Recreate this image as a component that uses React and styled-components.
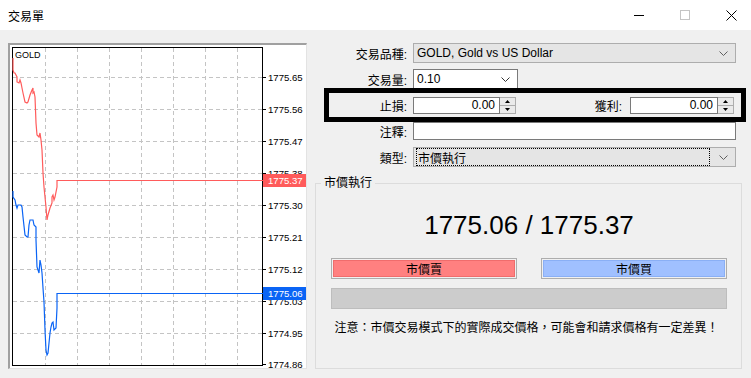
import React from "react";
import styled, { createGlobalStyle } from "styled-components";

const GlobalStyle = createGlobalStyle`
  html, body {
    margin: 0;
    padding: 0;
    background: #f0f0f0;
  }
  body {
    font-family: "Liberation Sans", "Noto Sans CJK TC", sans-serif;
    font-size: 12px;
    color: #000;
  }
`;

const red = [
  [13, 58], [13, 70], [14, 73], [15, 73], [17, 77], [17, 82], [19, 83], [20, 80],
  [21, 83], [22, 88], [23, 93], [25, 102], [27, 103], [28, 102], [30, 95],
  [32, 90], [33, 88], [33, 93], [34, 92], [35, 97], [36, 123], [37, 135],
  [39, 137], [40, 133], [41, 140], [42, 150], [43, 173], [44, 187], [46, 207],
  [47, 220], [48, 215], [50, 208], [52, 203], [52, 197], [53, 195], [54, 200],
  [55, 197], [57, 187], [57, 180.5], [263, 180.5],
];

const blue = [
  [13, 191], [13, 197], [15, 200], [16, 205], [17, 208], [18, 205], [21, 205],
  [22, 207], [23, 217], [25, 235], [27, 237], [28, 237], [29, 225], [30, 220],
  [33, 220], [34, 225], [36, 227], [36, 240], [37, 267], [39, 273], [40, 260],
  [41, 265], [42, 273], [43, 288], [44, 302], [45, 330], [46, 350], [47, 355],
  [48, 353], [49, 343], [50, 333], [51, 327], [52, 323], [53, 322], [54, 330],
  [56, 328], [57, 308], [57, 293.5], [263, 293.5],
];

const gridX = [45, 77, 109, 141, 173, 205, 237];
const levels = [
  ["1775.65", 77], ["1775.56", 109], ["1775.47", 141], ["1775.38", 173],
  ["1775.30", 205], ["1775.21", 237], ["1775.12", 269], ["1775.03", 301],
  ["1774.95", 333], ["1774.86", 364],
];

const toPoints = (list) => list.map(([x, y]) => `${x},${y}`).join(" ");

function PriceChart() {
  return (
    <svg width="296" height="323" viewBox="10 45 296 323">
      <g stroke="#c4c4c4" strokeDasharray="4 3" strokeWidth="1">
        {gridX.map((x) => (
          <line key={x} x1={x + 0.5} y1="48" x2={x + 0.5} y2="365" />
        ))}
        {levels.slice(0, 9).map(([, y]) => (
          <line key={y} x1="13" y1={y + 0.5} x2="262" y2={y + 0.5} />
        ))}
      </g>
      <rect x="12.5" y="47.5" width="250" height="318" fill="none" stroke="#000" />
      <text x="15" y="57.5" fontSize="9" fontFamily="Liberation Sans" fill="#000">
        GOLD
      </text>
      <polyline points={toPoints(red)} fill="none" stroke="#ff5b5b" strokeWidth="1.2" />
      <polyline points={toPoints(blue)} fill="none" stroke="#0a64f5" strokeWidth="1.2" />
      <g fontSize="9.6" fontFamily="Liberation Sans" fill="#000">
        {levels.map(([label, y]) => (
          <g key={label}>
            <line x1="263" y1={y + 0.5} x2="266" y2={y + 0.5} stroke="#000" />
            <text x="268" y={y + 3.5}>{label}</text>
          </g>
        ))}
      </g>
      <rect x="263" y="174" width="43" height="13" fill="#ff5b5b" />
      <text x="268" y="184" fontSize="9.6" fontFamily="Liberation Sans" fill="#fff">
        1775.37
      </text>
      <rect x="263" y="287" width="43" height="13" fill="#0a64f5" />
      <text x="268" y="297" fontSize="9.6" fontFamily="Liberation Sans" fill="#fff">
        1775.06
      </text>
    </svg>
  );
}

function Chevron({ color = "#606060" }) {
  return (
    <svg width="9" height="5" viewBox="0 0 9 5">
      <polyline points="0.5,0.5 4.5,4.5 8.5,0.5" fill="none" stroke={color} />
    </svg>
  );
}

function SpinBox({ value }) {
  return (
    <SpinGroup>
      <NumberBox>{value}</NumberBox>
      <Spinner>
        <SpinHalf>
          <svg width="5" height="3" viewBox="0 0 5 3">
            <polygon points="2.5,0 5,3 0,3" fill="#000" />
          </svg>
        </SpinHalf>
        <SpinHalf $bottom>
          <svg width="5" height="3" viewBox="0 0 5 3">
            <polygon points="0,0 5,0 2.5,3" fill="#000" />
          </svg>
        </SpinHalf>
      </Spinner>
    </SpinGroup>
  );
}

export default function App() {
  return (
    <>
      <GlobalStyle />
      <Window>
        <TitleBar>
          <Title>交易單</Title>
          <Controls>
            <ControlButton>
              <svg width="10" height="10" viewBox="0 0 10 10">
                <line x1="0" y1="5.5" x2="10" y2="5.5" stroke="#000" />
              </svg>
            </ControlButton>
            <ControlButton>
              <svg width="10" height="10" viewBox="0 0 10 10">
                <rect x="0.5" y="0.5" width="9" height="9" fill="none" stroke="#c4c4c4" />
              </svg>
            </ControlButton>
            <ControlButton>
              <svg width="11" height="11" viewBox="0 0 11 11">
                <path d="M0.5 0.5 L10.5 10.5 M10.5 0.5 L0.5 10.5" stroke="#000" />
              </svg>
            </ControlButton>
          </Controls>
        </TitleBar>

        <Main>
          <ChartPanel>
            <PriceChart />
          </ChartPanel>

          <RightPanel>
            <Form>
              <Row>
                <Label>交易品種:</Label>
                <Combo>
                  <ComboText>GOLD, Gold vs US Dollar</ComboText>
                  <Chevron />
                </Combo>
              </Row>
              <Row>
                <Label>交易量:</Label>
                <Combo $white $width="105px">
                  <ComboText>0.10</ComboText>
                  <Chevron color="#333" />
                </Combo>
              </Row>
              <StopRow>
                <Label>止損:</Label>
                <SpinBox value="0.00" />
                <Label $pad>獲利:</Label>
                <SpinBox value="0.00" />
                <Highlight />
              </StopRow>
              <Row>
                <Label>注釋:</Label>
                <TextBox />
              </Row>
              <Row>
                <Label>類型:</Label>
                <Combo $focus>
                  <FocusBox>市價執行</FocusBox>
                  <Chevron />
                </Combo>
              </Row>
            </Form>

            <Group>
              <Legend>市價執行</Legend>
              <GroupBody>
                <Quote>1775.06 / 1775.37</Quote>
                <ButtonRow>
                  <TradeButton>
                    <ButtonFill $tone="sell">市價賣</ButtonFill>
                  </TradeButton>
                  <TradeButton>
                    <ButtonFill $tone="buy">市價買</ButtonFill>
                  </TradeButton>
                </ButtonRow>
                <ProgressBar />
                <Note>注意：市價交易模式下的實際成交價格，可能會和請求價格有一定差異！</Note>
              </GroupBody>
            </Group>
          </RightPanel>
        </Main>
      </Window>
    </>
  );
}

const Window = styled.div`
  width: 751px;
  height: 378px;
  display: flex;
  flex-direction: column;
  background: #f0f0f0;
  overflow: hidden;
`;

const TitleBar = styled.div`
  height: 30px;
  flex-shrink: 0;
  display: flex;
  align-items: center;
  padding-left: 8px;
  background: #fff;
`;

const Title = styled.span`
  flex: 1;
  font-size: 12px;
`;

const Controls = styled.div`
  display: flex;
  height: 30px;
  margin-right: -3px;
`;

const ControlButton = styled.div`
  width: 46px;
  display: flex;
  align-items: center;
  justify-content: center;
  svg {
    display: block;
  }
`;

const Main = styled.div`
  flex: 1;
  min-height: 0;
  display: flex;
  padding: 13px 9px 9px 8px;
`;

const ChartPanel = styled.div`
  width: 299px;
  flex-shrink: 0;
  box-sizing: border-box;
  background: #fff;
  border-top: 2px solid #a0a0a0;
  border-left: 2px solid #a0a0a0;
  border-right: 1px solid #e3e3e3;
  border-bottom: 1px solid #e3e3e3;
  svg {
    display: block;
  }
`;

const RightPanel = styled.div`
  flex: 1;
  display: flex;
  flex-direction: column;
  padding-left: 8px;
`;

const Form = styled.div`
  display: flex;
  flex-direction: column;
  gap: 6px;
  margin-right: 6px;
`;

const Row = styled.div`
  display: grid;
  grid-template-columns: 92px 1fr;
  column-gap: 6px;
  align-items: center;
  height: 20px;
`;

const StopRow = styled.div`
  position: relative;
  display: grid;
  grid-template-columns: 92px 103px 1fr 104px;
  column-gap: 6px;
  align-items: center;
  height: 20px;
  margin-right: 2px;
`;

const Highlight = styled.div`
  position: absolute;
  top: -7px;
  bottom: -7px;
  left: 9px;
  right: -12px;
  border: 5px solid #000;
  pointer-events: none;
`;

const Label = styled.span`
  text-align: right;
  white-space: nowrap;
  padding-right: ${(p) => (p.$pad ? "2px" : "0")};
`;

const Combo = styled.div`
  display: flex;
  align-items: center;
  box-sizing: border-box;
  height: 20px;
  width: ${(p) => p.$width || "auto"};
  padding: ${(p) => (p.$focus ? "0 7px 0 2px" : "0 7px 0 3px")};
  background: ${(p) => (p.$white ? "#fff" : "#e5e5e5")};
  border: 1px solid ${(p) => (p.$white ? "#7a7a7a" : "#adadad")};
  svg {
    display: block;
    flex-shrink: 0;
  }
`;

const ComboText = styled.span`
  flex: 1;
  white-space: nowrap;
`;

const FocusBox = styled.span`
  flex: 1;
  align-self: stretch;
  display: flex;
  align-items: center;
  margin-right: 9px;
  padding-left: 1px;
  border: 1px dotted #000;
`;

const TextBox = styled.div`
  height: 18px;
  box-sizing: border-box;
  background: #fff;
  border: 1px solid #7a7a7a;
`;

const SpinGroup = styled.div`
  display: flex;
  height: 17px;
`;

const NumberBox = styled.div`
  flex: 1;
  box-sizing: border-box;
  background: #fff;
  border: 1px solid #7a7a7a;
  text-align: right;
  padding-right: 4px;
  line-height: 15px;
`;

const Spinner = styled.div`
  width: 16px;
  box-sizing: border-box;
  display: flex;
  flex-direction: column;
  background: #eaeaea;
  border: 1px solid #adadad;
  border-left: none;
`;

const SpinHalf = styled.div`
  flex: 1;
  display: flex;
  align-items: center;
  justify-content: center;
  border-top: ${(p) => (p.$bottom ? "1px solid #adadad" : "none")};
  svg {
    display: block;
  }
`;

const Group = styled.fieldset`
  flex: 1;
  min-width: 0;
  margin: 8px 0 0;
  padding: 0;
  border: 1px solid #dcdcdc;
`;

const Legend = styled.legend`
  margin-left: 5px;
  padding: 0 3px;
  font-size: 12px;
  line-height: 16px;
`;

const GroupBody = styled.div`
  display: flex;
  flex-direction: column;
  align-items: center;
  padding: 0 14px 0 15px;
`;

const Quote = styled.div`
  margin-top: 19px;
  font-size: 26px;
  line-height: 30px;
  white-space: nowrap;
`;

const ButtonRow = styled.div`
  align-self: stretch;
  display: flex;
  justify-content: space-between;
  margin-top: 18px;
`;

const TradeButton = styled.div`
  width: 186px;
  height: 21px;
  box-sizing: border-box;
  padding: 1px;
  border: 1px solid #adadad;
  background: #f0f0f0;
  display: flex;
`;

const ButtonFill = styled.div`
  flex: 1;
  display: flex;
  align-items: center;
  justify-content: center;
  background: ${(p) => (p.$tone === "sell" ? "#ff8080" : "#a0c0ff")};
  border: 1px solid ${(p) => (p.$tone === "sell" ? "#f06c6c" : "#8aaff5")};
  font-size: 12px;
`;

const ProgressBar = styled.div`
  align-self: stretch;
  height: 21px;
  box-sizing: border-box;
  margin-top: 9px;
  background: #cccccc;
  border: 1px solid #bdbdbd;
`;

const Note = styled.div`
  margin-top: 11px;
  margin-right: 5px;
  font-size: 12px;
  line-height: 16px;
  white-space: nowrap;
`;
